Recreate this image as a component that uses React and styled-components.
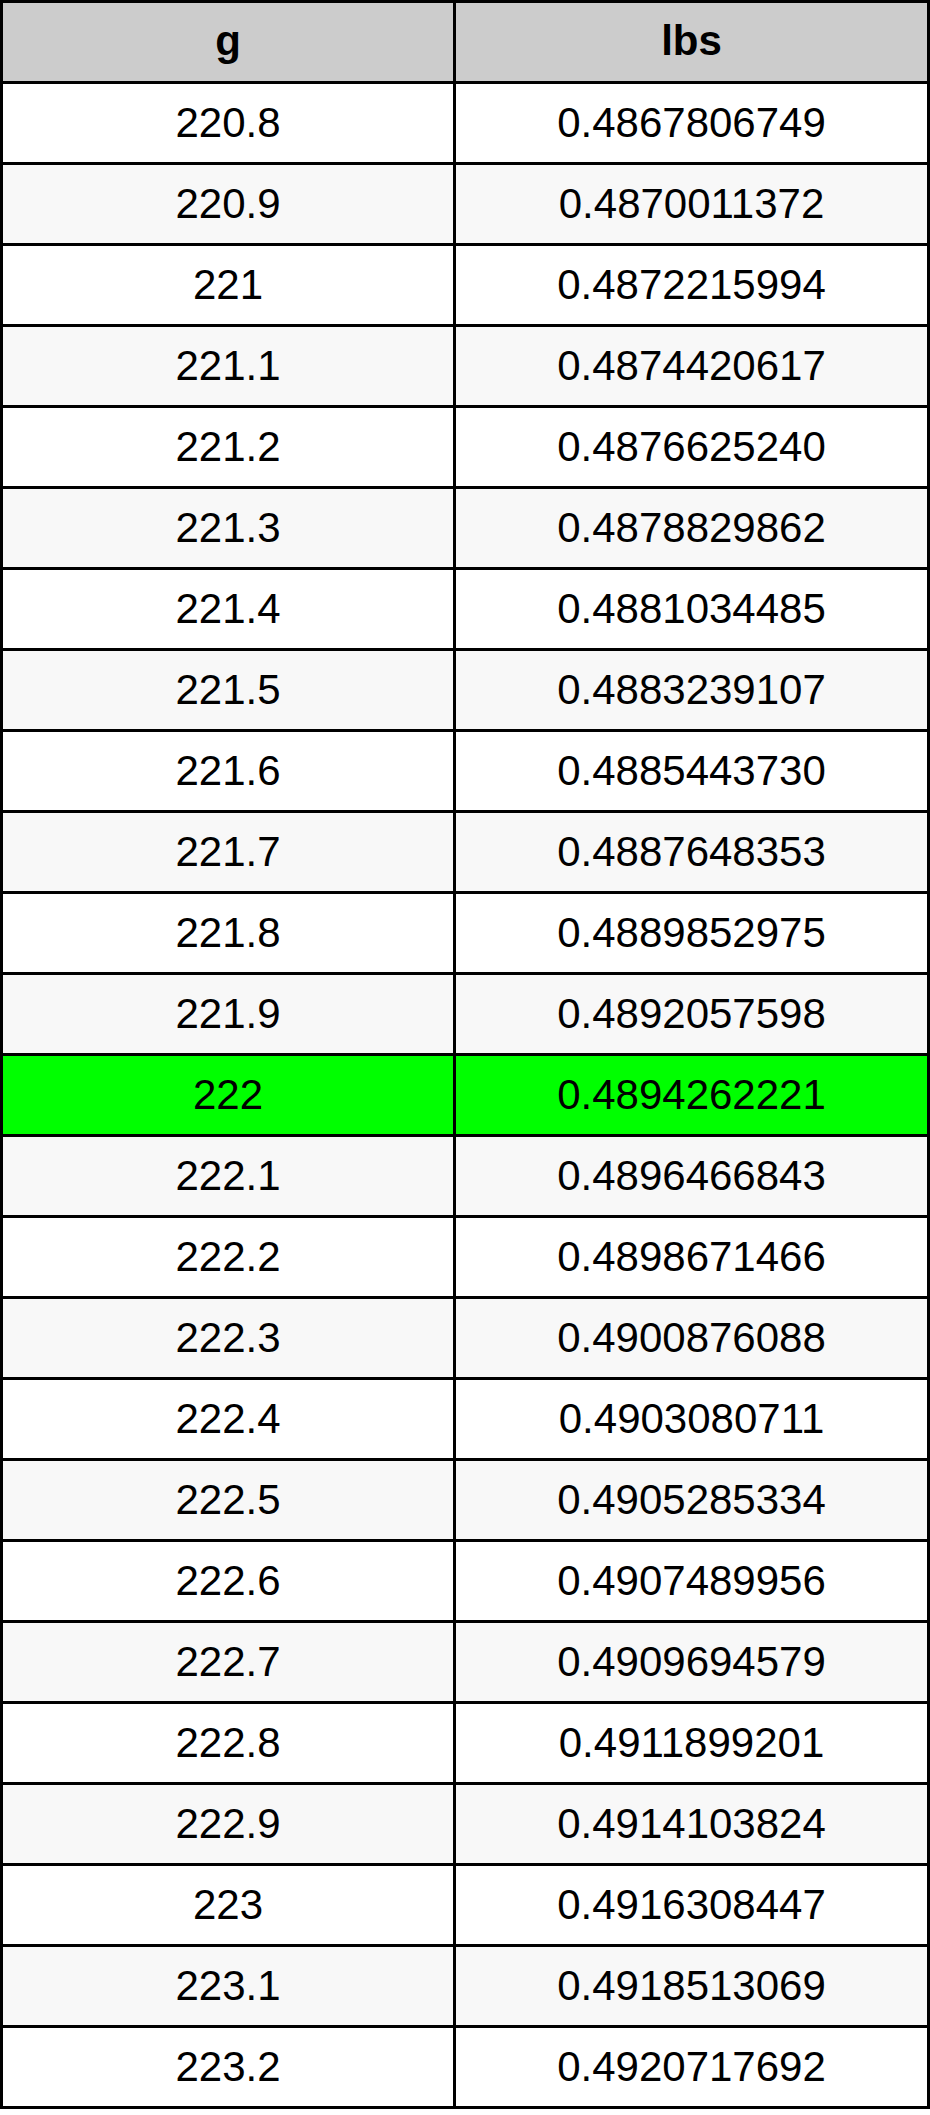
import React from "react";
import styled, { createGlobalStyle } from "styled-components";

const rows = [
  ["220.8", "0.4867806749"],
  ["220.9", "0.4870011372"],
  ["221", "0.4872215994"],
  ["221.1", "0.4874420617"],
  ["221.2", "0.4876625240"],
  ["221.3", "0.4878829862"],
  ["221.4", "0.4881034485"],
  ["221.5", "0.4883239107"],
  ["221.6", "0.4885443730"],
  ["221.7", "0.4887648353"],
  ["221.8", "0.4889852975"],
  ["221.9", "0.4892057598"],
  ["222", "0.4894262221"],
  ["222.1", "0.4896466843"],
  ["222.2", "0.4898671466"],
  ["222.3", "0.4900876088"],
  ["222.4", "0.4903080711"],
  ["222.5", "0.4905285334"],
  ["222.6", "0.4907489956"],
  ["222.7", "0.4909694579"],
  ["222.8", "0.4911899201"],
  ["222.9", "0.4914103824"],
  ["223", "0.4916308447"],
  ["223.1", "0.4918513069"],
  ["223.2", "0.4920717692"],
];

const GlobalStyle = createGlobalStyle`
  html, body {
    margin: 0;
    padding: 0;
    background: #fff;
  }
  body {
    font-family: "Liberation Sans", Arial, sans-serif;
    color: #000;
  }
`;

const Table = styled.div`
  display: grid;
  grid-template-columns: 453px 474px;
  width: 927px;
  border-top: 3px solid #000;
  border-left: 3px solid #000;
`;

const Cell = styled.div`
  box-sizing: border-box;
  height: 81px;
  line-height: 78px;
  border-right: 3px solid #000;
  border-bottom: 3px solid #000;
  text-align: center;
  font-size: 42px;
  white-space: nowrap;
  background: ${(p) => p.$bg};
`;

const HeaderCell = styled(Cell)`
  font-weight: bold;
  line-height: 76px;
  background: #cccccc;
`;

const rowColor = (i, g) => {
  if (g === "222") return "#00ff00";
  return i % 2 === 1 ? "#f8f8f8" : "#ffffff";
};

export default function App() {
  return (
    <>
      <GlobalStyle />
      <Table role="table">
        <HeaderCell role="columnheader">g</HeaderCell>
        <HeaderCell role="columnheader">lbs</HeaderCell>
        {rows.map(([g, lbs], i) => (
          <React.Fragment key={g}>
            <Cell role="cell" $bg={rowColor(i, g)}>{g}</Cell>
            <Cell role="cell" $bg={rowColor(i, g)}>{lbs}</Cell>
          </React.Fragment>
        ))}
      </Table>
    </>
  );
}
